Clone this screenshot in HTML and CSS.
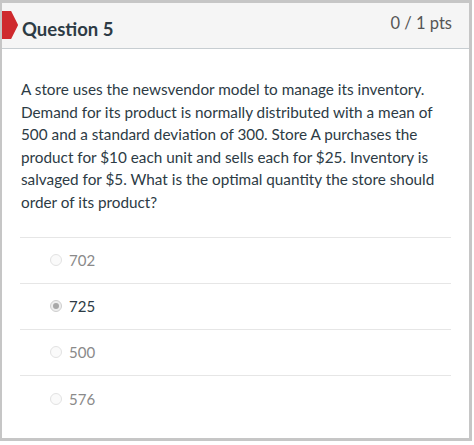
FILE: index.html
```html
<!DOCTYPE html>
<html>
<head>
<meta charset="utf-8">
<link rel="stylesheet" href="styles.css">
</head>
<body>
<div class="frame">
  <div class="header">
    <svg class="flag" width="18" height="28" viewBox="0 0 18 28">
      <polygon points="-4,0 10,0 17,14 10,28 -4,28" fill="#cf2a2e" stroke="#cf2a2e" stroke-width="2" stroke-linejoin="round"/>
    </svg>
    <h2 class="title">Question 5</h2>
    <div class="pts">0 / 1 pts</div>
  </div>
  <div class="content">
    <p class="question">A store uses the newsvendor model to manage its inventory. Demand for its product is normally distributed with a mean of 500 and a standard deviation of 300. Store A purchases the product for $10 each unit and sells each for $25. Inventory is salvaged for $5. What is the optimal quantity the store should order of its product?</p>
    <div class="answers">
      <div class="answer"><span class="radio"></span><span class="label">702</span></div>
      <div class="answer selected"><span class="radio"></span><span class="label">725</span></div>
      <div class="answer"><span class="radio"></span><span class="label">500</span></div>
      <div class="answer"><span class="radio"></span><span class="label">576</span></div>
    </div>
  </div>
</div>
</body>
</html>
```

FILE: styles.css
```css
* { box-sizing: border-box; }
html, body { margin: 0; padding: 0; background: #fff; }
body { font-family: Lato, "Open Sans", "Liberation Sans", sans-serif; color: #2d3b45; }
.frame {
  width: 472px;
  height: 441px;
  border: 3px solid #c6c6c6;
  border-left-width: 2px;
  background: #fff;
  overflow: hidden;
}
.header {
  height: 46px;
  background: #f5f5f5;
  border-bottom: 1px solid #c7cdd1;
  display: flex;
  align-items: center;
  position: relative;
  padding: 0 17px 0 20px;
}
.flag { position: absolute; left: -2px; top: 8px; }
.title {
  margin: 0;
  font-size: 18.5px;
  font-weight: 700;
  color: #2d3b45;
  flex: 1;
  padding-top: 6px;
}
.pts {
  font-size: 16.5px;
  color: #555;
  align-self: flex-start;
  padding-top: 10px;
}
.content { padding: 29px 18px 0 18px; }
.question {
  margin: 0 0 0 1px;
  font-size: 15.3px;
  line-height: 22.6px;
  color: #2d3b45;
}
.answers { margin-top: 23px; border-top: 1px solid #e6e6e6; }
.answer {
  height: 46px;
  display: flex;
  align-items: center;
  border-bottom: 1px solid #e6e6e6;
  padding-left: 30px;
}
.answer:last-child { border-bottom: none; }
.radio {
  width: 12px;
  height: 12px;
  border-radius: 50%;
  border: 1px solid #e2e2e2;
  background: #fafafa;
  margin-right: 7px;
  position: relative;
}
.selected .radio { border-color: #cfcfcf; background: #eee; }
.selected .radio::after {
  content: "";
  position: absolute;
  left: 2px; top: 2px;
  width: 6px; height: 6px;
  border-radius: 50%;
  background: #a8a8a8;
}
.label { font-size: 15px; color: #8a8a8a; }
.selected .label { color: #2d3b45; }
```
